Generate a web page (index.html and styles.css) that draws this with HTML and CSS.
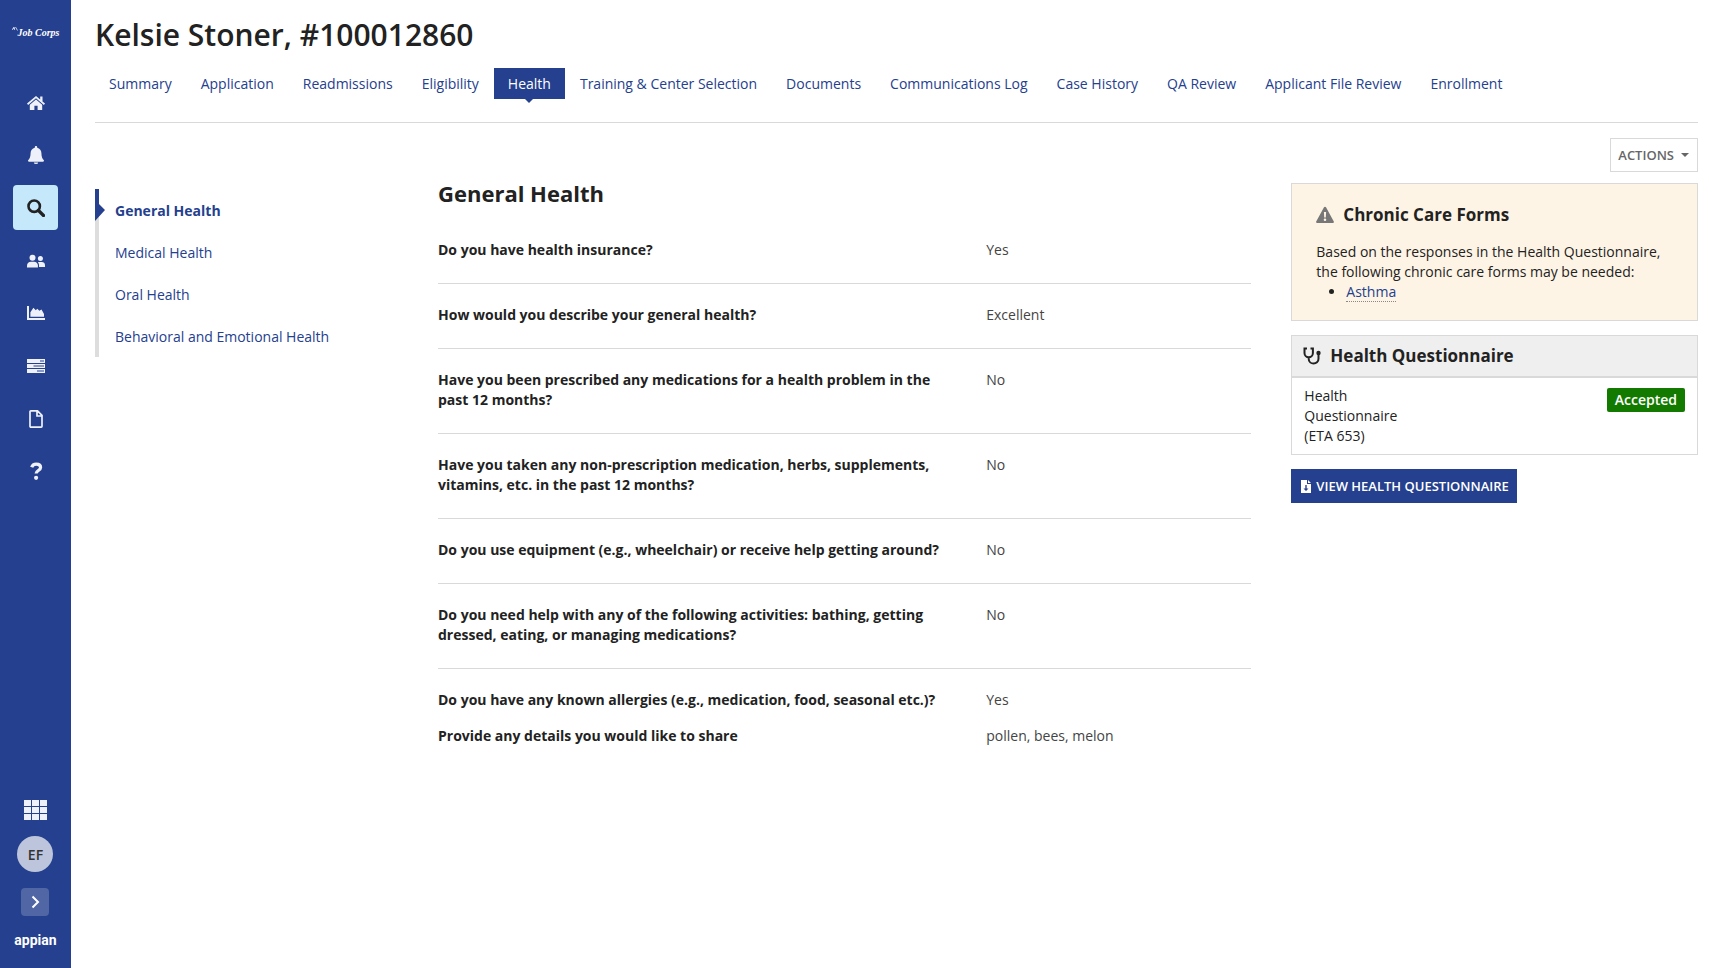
FILE: index.html
```html
<!DOCTYPE html>
<html lang="en">
<head>
  <meta charset="UTF-8" />
  <meta name="viewport" content="width=device-width, initial-scale=1" />
  <title>Kelsie Stoner, #100012860</title>
  <link rel="stylesheet" href="styles.css">
</head>
<body>
  <aside class="sidebar">
    <a class="logo" href="#"><svg class="logo-mark" viewBox="0 0 6 5" aria-hidden="true"><path d="M0 4L2 1M2 1L2.500 4M3.500 1L5.500 4.500M1 2.500h2" /></svg>Job Corps</a>

    <nav class="side-icons">
      <a href="#" aria-label="Home">
        <svg viewBox="0 0 18 16"><path d="M9 1L0 8.600l1.100 1.300L9 3.300l7.900 6.600L18 8.600l-2.500-2.100V1.500h-2.300v3zM9 4.600L2.800 9.800V15h4.600v-4.300h3.200V15h4.600V9.800z" /></svg>
      </a>
      <a href="#" aria-label="Notifications">
        <svg viewBox="0 0 18 18"><path d="M9 0c-.7 0-1.200.5-1.200 1.200v.5C5.200 2.300 3.600 4.400 3.600 7c0 4-1 5.600-2.300 7-.6.700-.2 1.700.7 1.700h14c.9 0 1.300-1 .7-1.700-1.300-1.400-2.300-3-2.300-7 0-2.600-1.600-4.700-4.200-5.300v-.5C10.200.5 9.700 0 9 0zM6.800 16.400a2.200 1.600 0 0 0 4.400 0z" /></svg>
      </a>
      <a class="active" href="#" aria-label="Search">
        <svg viewBox="0 0 18 18"><circle cx="7.200" cy="7.200" r="5.700" fill="none" stroke="currentColor" stroke-width="2.600" /><path d="M11.500 11.500l5 5" stroke="currentColor" stroke-width="3.200" stroke-linecap="round" /></svg>
      </a>
      <a href="#" aria-label="Applicants">
        <svg viewBox="0 0 18 18"><circle cx="5.500" cy="5.700" r="3" /><path d="M0 15.500v-2C0 11 1.900 9.700 4 9.700h3c2.200 0 3.900 1.300 3.900 3.800v2z" /><circle cx="13.400" cy="6.500" r="2.500" /><path d="M12 15h6v-1.800c0-2-1.400-3.200-3.200-3.200h-2.600c-.5 0-.9.100-1.300.3.800.8 1.100 1.900 1.100 3.200z" /></svg>
      </a>
      <a href="#" aria-label="Reports">
        <svg viewBox="0 0 18 18"><path d="M0 2h2v12h16v2H0zM3.400 12.700V8.300l3-4.500 2.400 2.500 1.500-1.500 2 2 2.200-1.200L17 10v2.700z" /></svg>
      </a>
      <a href="#" aria-label="Tasks">
        <svg viewBox="0 0 18 18"><path fill-rule="evenodd" d="M0 2h18v4H0zM13 3.500v1h4v-1zM0 7h18v4H0zM6.500 8.500v1H17v-1zM0 12h18v4H0zM10 13.500v1h7v-1z" /></svg>
      </a>
      <a href="#" aria-label="Documents">
        <svg viewBox="0 0 18 18"><path d="M3.900.9h6.600L15 5.400v10.800a.9.900 0 0 1-.9.900H3.900a.9.900 0 0 1-.9-.9V1.800a.9.900 0 0 1 .9-.9zM10 1v5h5" fill="none" stroke="currentColor" stroke-width="1.700" /></svg>
      </a>
      <a href="#" aria-label="Help">
        <svg viewBox="0 0 18 18"><path d="M4.700 5.300c.6-2 2.200-3.200 4.500-3.200 2.600 0 4.400 1.300 4.400 3.400 0 3-4.500 3-4.500 6" fill="none" stroke="currentColor" stroke-width="3.200" /><circle cx="9.100" cy="15.800" r="2.100" /></svg>
      </a>
    </nav>

    <div class="side-bottom">
      <button class="apps" type="button" aria-label="Applications">
        <svg viewBox="0 0 23 20"><path d="M0 0h7v6H0zM8 0h7v6H8zM16 0h7v6h-7zM0 7h7v6H0zM8 7h7v6H8zM16 7h7v6h-7zM0 14h7v6H0zM8 14h7v6H8zM16 14h7v6h-7z" /></svg>
      </button>
      <button class="avatar" type="button">EF</button>
      <button class="expand" type="button" aria-label="Expand">
        <svg viewBox="0 0 14 14"><path d="M4.500 1.500L10 7l-5.500 5.500" /></svg>
      </button>
      <span class="brand">appian</span>
    </div>
  </aside>

  <main class="page">
    <h1>Kelsie Stoner, #100012860</h1>
    <nav class="tabs">
      <a href="#">Summary</a>
      <a href="#">Application</a>
      <a href="#">Readmissions</a>
      <a href="#">Eligibility</a>
      <a class="active" href="#">Health</a>
      <a href="#">Training &amp; Center Selection</a>
      <a href="#">Documents</a>
      <a href="#">Communications Log</a>
      <a href="#">Case History</a>
      <a href="#">QA Review</a>
      <a href="#">Applicant File Review</a>
      <a href="#">Enrollment</a>
    </nav>

    <div class="toolbar">
      <button class="actions" type="button">ACTIONS <span class="caret"></span></button>
    </div>

    <div class="columns">
      <nav class="sections">
        <a class="active" href="#">General Health</a>
        <a href="#">Medical Health</a>
        <a href="#">Oral Health</a>
        <a href="#">Behavioral and Emotional Health</a>
      </nav>

      <section class="answers">
        <h2>General Health</h2>
        <dl>
          <div class="row">
            <dt>Do you have health insurance?</dt>
            <dd>Yes</dd>
          </div>
          <div class="row">
            <dt>How would you describe your general health?</dt>
            <dd>Excellent</dd>
          </div>
          <div class="row">
            <dt>Have you been prescribed any medications for a health problem in the past 12 months?</dt>
            <dd>No</dd>
          </div>
          <div class="row">
            <dt>Have you taken any non-prescription medication, herbs, supplements, vitamins, etc. in the past 12 months?</dt>
            <dd>No</dd>
          </div>
          <div class="row">
            <dt>Do you use equipment (e.g., wheelchair) or receive help getting around?</dt>
            <dd>No</dd>
          </div>
          <div class="row">
            <dt>Do you need help with any of the following activities: bathing, getting dressed, eating, or managing medications?</dt>
            <dd>No</dd>
          </div>
          <div class="row followed">
            <dt>Do you have any known allergies (e.g., medication, food, seasonal etc.)?</dt>
            <dd>Yes</dd>
          </div>
          <div class="row detail">
            <dt>Provide any details you would like to share</dt>
            <dd>pollen, bees, melon</dd>
          </div>
        </dl>
      </section>

      <aside class="cards">
        <section class="card warning">
          <h3>
            <svg class="icon" viewBox="0 0 18 18" aria-hidden="true"><path fill-rule="evenodd" d="M8 1.300a1.150 1.150 0 0 1 2 0l7.800 14.200A1 1 0 0 1 16.900 17H1.100a1 1 0 0 1-.9-1.500zM7.900 6l.3 5.500h1.600l.3-5.500zM9 12.500a1.300 1.300 0 1 0 0 2.600 1.300 1.300 0 0 0 0-2.600z" /></svg>
            Chronic Care Forms
          </h3>
          <p>Based on the responses in the Health Questionnaire, the following chronic care forms may be needed:</p>
          <ul>
            <li><a href="#">Asthma</a></li>
          </ul>
        </section>

        <section class="card">
          <h3 class="card-header">
            <svg class="icon" viewBox="0 0 18 18" aria-hidden="true"><path d="M4 1.500H1.500V6a4.200 4.200 0 0 0 8.400 0V1.500H7.500M5.700 10.200v1.500c0 6.500 9.800 6.500 9.800 0V7" fill="none" stroke="currentColor" stroke-width="2" /><circle cx="15.500" cy="6" r="2.200" /></svg>
            Health Questionnaire
          </h3>
          <div class="card-body">
            <span class="form-name">Health Questionnaire (ETA 653)</span>
            <span class="status">Accepted</span>
          </div>
        </section>

        <button class="primary" type="button">
          <svg viewBox="0 0 10 13" aria-hidden="true"><path fill-rule="evenodd" d="M0 0h6v4h4v9H0zM7 0l3 3H7zM4.300 5v3.500H2.500L5 11l2.500-2.500H5.700V5z" /></svg>
          VIEW HEALTH QUESTIONNAIRE
        </button>
      </aside>
    </div>
  </main>
</body>
</html>
```

FILE: styles.css
```css
* {
  box-sizing: border-box;
}
body {
  margin: 0;
  display: flex;
  min-height: 100vh;
  background: #fff;
  color: #222;
  font-family: 'Open Sans', 'Noto Sans', sans-serif;
  font-size: 14px;
  line-height: 20px;
}
a {
  color: #24408e;
  text-decoration: none;
}
button {
  font-family: inherit;
  cursor: pointer;
}
h1, h2, h3, p, ul, dl, dd {
  margin: 0;
  padding: 0;
}

/* left icon bar */
.sidebar {
  flex: none;
  width: 71px;
  background: #24408e;
  color: #eef1fa;
  display: flex;
  flex-direction: column;
  align-items: center;
}
.logo {
  display: flex;
  margin-top: 23px;
  color: #fff;
  font-family: 'Liberation Serif', serif;
  font-size: 10px;
  font-weight: bold;
  font-style: italic;
  white-space: nowrap;
}
.logo-mark {
  width: 6px;
  height: 5px;
  margin-top: 3px;
  fill: none;
  stroke: #c3cbe4;
  stroke-width: 1;
}
.side-icons {
  display: flex;
  flex-direction: column;
  justify-content: space-between;
  height: 414px;
  margin-top: 37px;
}
.side-icons a {
  display: grid;
  place-items: center;
  width: 45px;
  height: 45px;
  border-radius: 4px;
  color: inherit;
}
.side-icons a.active {
  background: #c5e8fb;
  color: #222;
}
.side-icons svg {
  width: 18px;
  height: 18px;
  fill: currentColor;
}
.side-bottom {
  margin-top: auto;
  padding-bottom: 18px;
  display: flex;
  flex-direction: column;
  align-items: center;
}
.side-bottom button {
  border: none;
  padding: 0;
  display: grid;
  place-items: center;
}
.side-bottom .apps {
  background: none;
  color: inherit;
}
.apps svg {
  display: block;
  width: 23px;
  height: 20px;
  fill: currentColor;
}
.avatar {
  width: 36px;
  height: 36px;
  margin: 16px 0;
  border-radius: 50%;
  background: #bdc5dd;
  color: #333;
  font-size: 14px;
  font-weight: 600;
}
.expand {
  width: 28px;
  height: 28px;
  border-radius: 4px;
  background: #5066a5;
}
.expand svg {
  width: 14px;
  height: 14px;
  fill: none;
  stroke: #fff;
  stroke-width: 2;
}
.brand {
  margin-top: 14px;
  color: #fff;
  font-family: Roboto, sans-serif;
  font-size: 14px;
  font-weight: bold;
}

/* page header */
.page {
  flex: 1;
  min-width: 0;
  padding: 15px 24px;
}
h1 {
  font-size: 30px;
  font-weight: 600;
  line-height: 40px;
}
.tabs {
  display: flex;
  flex-wrap: wrap;
  gap: 1px;
  margin-top: 13px;
  padding-bottom: 23px;
  border-bottom: 1px solid #d9d9d9;
}
.tabs a {
  position: relative;
  padding: 6px 14px 5px;
}
.tabs .active {
  background: #24408e;
  color: #fff;
}
.tabs .active::after {
  content: '';
  position: absolute;
  top: 100%;
  left: 50%;
  margin-left: -4px;
  border: 4px solid transparent;
  border-top-color: #24408e;
}
.toolbar {
  display: flex;
  justify-content: flex-end;
  margin-top: 15px;
}
.actions {
  display: flex;
  align-items: center;
  gap: 7px;
  height: 34px;
  padding: 0 8px 0 7px;
  background: #fff;
  border: 1px solid #d9d9d9;
  color: #666;
  font-size: 13px;
  font-weight: 600;
}
.caret {
  border: 4px solid transparent;
  border-top-color: #666;
  border-bottom: none;
}

/* three column content */
.columns {
  display: flex;
  align-items: flex-start;
  gap: 40px;
  margin-top: 11px;
}
.sections {
  flex: 0 1 303px;
  margin-top: 6px;
}
.sections a {
  position: relative;
  display: block;
  padding: 12px 0 10px 16px;
  border-left: 4px solid #ddd;
}
.sections .active {
  font-weight: bold;
}
.sections .active::before {
  content: '';
  position: absolute;
  top: 0;
  left: -4px;
  width: 10px;
  height: 32px;
  background: #24408e;
  clip-path: polygon(0 0, 4px 0, 4px 15px, 10px 21px, 0 32px);
}
.answers {
  flex: 2 1 0;
}
h2 {
  font-size: 22px;
  font-weight: bold;
  line-height: 20px;
}
.row {
  display: grid;
  grid-template-columns: 2fr 1fr;
  gap: 18px;
  padding: 21px 0 23px;
  border-bottom: 1px solid #d9d9d9;
}
.row:first-child {
  padding-top: 37px;
}
.row.followed {
  padding-bottom: 0;
  border-bottom: none;
}
.row.detail {
  padding-top: 16px;
  border-bottom: none;
}
dt {
  padding-right: 16px;
  font-weight: bold;
}
dd {
  color: #444;
}

/* cards */
.cards {
  flex: 1 1 0;
  display: flex;
  flex-direction: column;
  align-items: stretch;
  gap: 14px;
}
.card {
  border: 1px solid #d9d9d9;
}
.card h3 {
  display: flex;
  align-items: center;
  gap: 9px;
  font-size: 17px;
  font-weight: bold;
  line-height: 24px;
}
.icon {
  width: 18px;
  height: 18px;
  fill: currentColor;
}
.warning {
  padding: 19px 24px 18px;
  background: #fef4e5;
}
.warning .icon {
  fill: #777;
}
.warning p {
  margin-top: 15px;
}
.warning ul {
  padding-left: 30px;
}
.warning li a {
  border-bottom: 1px dotted #888;
}
.card .card-header {
  padding: 8px 11px;
  background: #efefef;
  border-bottom: 2px solid #d9d9d9;
}
.card-body {
  display: flex;
  justify-content: space-between;
  align-items: flex-start;
  padding: 8px 12px;
}
.form-name {
  flex: 0 1 110px;
}
.status {
  margin-top: 2px;
  padding: 2px 8px;
  background: #137a00;
  border-radius: 2px;
  color: #fff;
  font-weight: 600;
}
.primary {
  align-self: flex-start;
  display: flex;
  align-items: center;
  gap: 5px;
  height: 34px;
  padding: 0 8px 0 10px;
  border: none;
  background: #24408e;
  color: #fff;
  font-size: 13px;
  font-weight: 600;
}
.primary svg {
  width: 10px;
  height: 13px;
  fill: currentColor;
}
```
